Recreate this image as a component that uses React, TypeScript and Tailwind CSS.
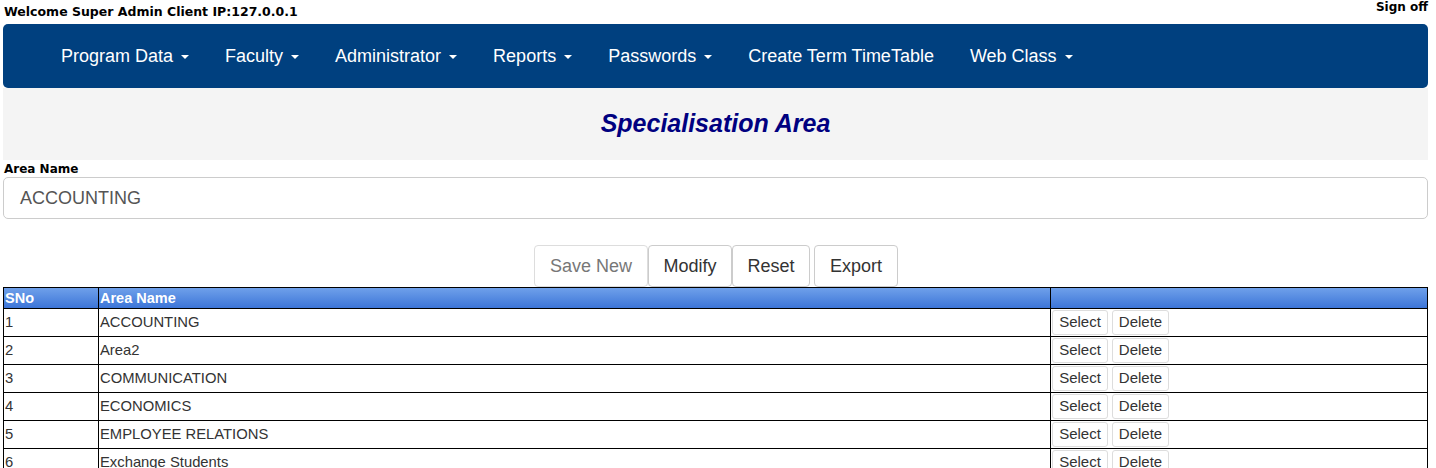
import React from 'react';

const navItems = [
  { label: 'Program Data', caret: true },
  { label: 'Faculty', caret: true },
  { label: 'Administrator', caret: true },
  { label: 'Reports', caret: true },
  { label: 'Passwords', caret: true },
  { label: 'Create Term TimeTable', caret: false },
  { label: 'Web Class', caret: true },
];

const areas = ['ACCOUNTING', 'Area2', 'COMMUNICATION', 'ECONOMICS', 'EMPLOYEE RELATIONS', 'Exchange Students'];

export default function App() {
  return (
    <div className="min-h-screen bg-white font-['Liberation_Sans',Arial,sans-serif]">
      {/* Top bar */}
      <div className="flex justify-between h-6 pl-1 pr-2">
        <div className="pt-[5px] text-[12.5px] font-bold text-black font-['DejaVu_Sans',Verdana,sans-serif] leading-[14px]">
          Welcome Super Admin Client IP:127.0.0.1
        </div>
        <a className="text-[12px] font-bold text-black font-['DejaVu_Sans',Verdana,sans-serif] leading-[14px]">
          Sign off
        </a>
      </div>

      <div className="pl-[3px] pr-[8px]">
        {/* Navbar */}
        <nav className="bg-[#00407f] rounded-[5px] h-16 flex items-center pl-[40px]">
          {navItems.map((item) => (
            <a key={item.label} className="flex items-center px-[18px] text-white text-[18px] leading-5 whitespace-nowrap">
              {item.label}
              {item.caret && (
                <span className="ml-[8px] inline-block w-0 h-0 border-l-[4px] border-r-[4px] border-t-[4px] border-l-transparent border-r-transparent border-t-white mt-[2px]" />
              )}
            </a>
          ))}
        </nav>

        {/* Title */}
        <div className="bg-[#f4f4f4] h-[72px] flex items-center justify-center">
          <h1 className="text-[25px] font-bold italic text-[#000080]">Specialisation Area</h1>
        </div>
      </div>

      <div className="pl-[3px] pr-[8px]">
        <label className="block pl-[1px] pt-[2px] text-[12px] font-bold text-black font-['DejaVu_Sans',Verdana,sans-serif] leading-[15px]">
          Area Name
        </label>
        <div className="h-[42px] border border-[#ccc] rounded-[5px] flex items-center px-4 text-[18px] text-[#555]">
          ACCOUNTING
        </div>

        {/* Actions */}
        <div className="flex justify-center mt-[26px] pl-[1px]">
          <button className="h-[42px] w-[114px] border border-[#ddd] rounded-[4px] text-[18px] text-[#777] bg-white whitespace-nowrap">Save New</button>
          <button className="h-[42px] w-[84px] border border-[#ccc] rounded-[4px] text-[18px] text-[#333] bg-white whitespace-nowrap">Modify</button>
          <button className="h-[42px] w-[78px] border border-[#ccc] rounded-[4px] text-[18px] text-[#333] bg-white whitespace-nowrap">Reset</button>
          <button className="ml-[4px] h-[42px] w-[84px] border border-[#ccc] rounded-[4px] text-[18px] text-[#333] bg-white whitespace-nowrap">Export</button>
        </div>

        {/* Table */}
        <table className="w-full border-collapse border border-black text-[14.8px] text-[#333]">
          <thead>
            <tr className="h-[21px] bg-gradient-to-b from-[#6fa0ea] to-[#3a73d7] text-white">
              <th className="w-[95px] border border-black text-left font-bold px-[1px] leading-4 text-[14.5px]">SNo</th>
              <th className="border border-black text-left font-bold px-[1px] leading-4 text-[14.5px]">Area Name</th>
              <th className="w-[377px] border border-black" />
            </tr>
          </thead>
          <tbody>
            {areas.map((name, i) => (
              <tr key={name} className="h-[28px]">
                <td className="border border-black px-[1px] align-top pt-[5px] leading-4">{i + 1}</td>
                <td className="border border-black px-[1px] align-top pt-[5px] leading-4">{name}</td>
                <td className="border border-black px-[1px] py-[1px]">
                  <div className="flex gap-[4px]">
                    <button className="h-[25px] w-[56px] border border-[#ddd] rounded-[3px] bg-white text-[15px] text-[#333]">Select</button>
                    <button className="h-[25px] w-[57px] border border-[#ddd] rounded-[3px] bg-white text-[15px] text-[#333]">Delete</button>
                  </div>
                </td>
              </tr>
            ))}
          </tbody>
        </table>
      </div>
    </div>
  );
}
